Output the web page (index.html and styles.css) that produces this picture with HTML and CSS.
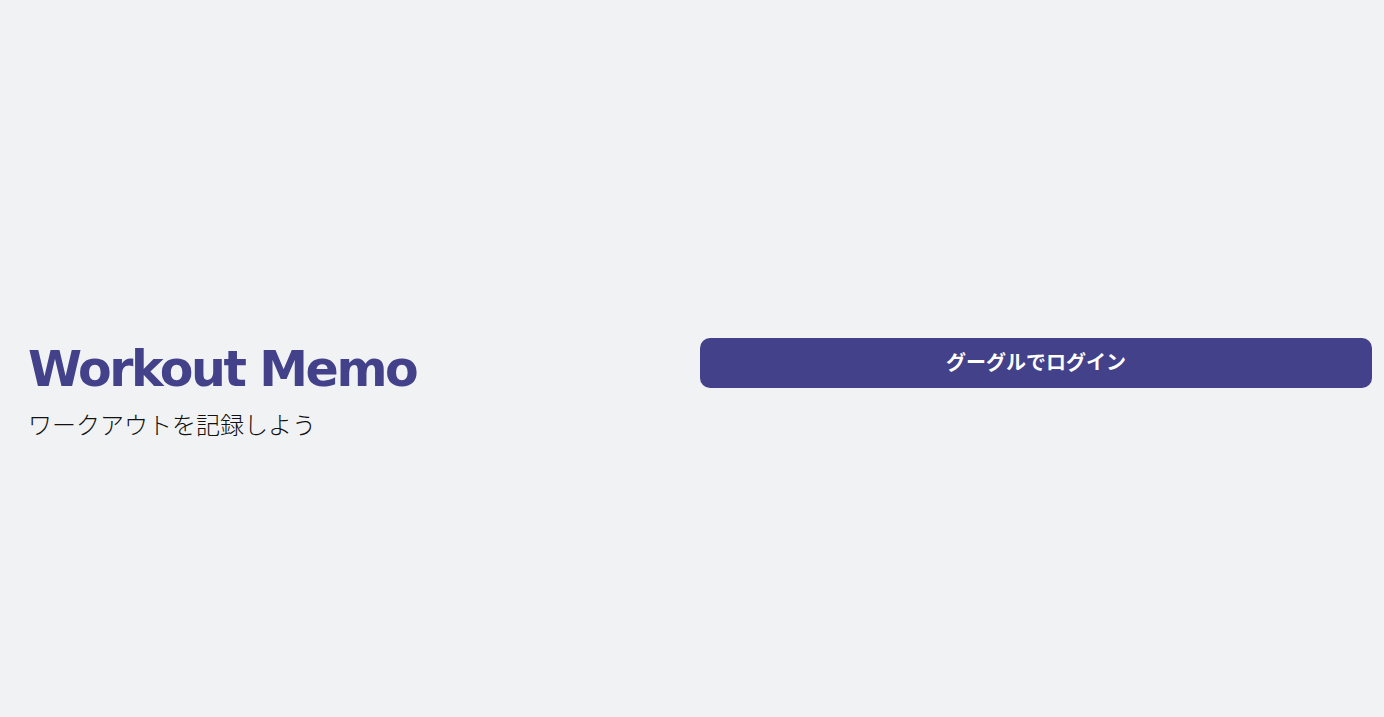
FILE: index.html
```html
<!DOCTYPE html>
<html lang="ja">
<head>
<meta charset="utf-8">
<title>Workout Memo</title>
<link rel="stylesheet" href="styles.css">
</head>
<body>
<main class="page">
  <section class="hero">
    <h1 class="title">Workout Memo</h1>
    <p class="subtitle">ワークアウトを記録しよう</p>
  </section>
  <section class="actions">
    <button class="login">グーグルでログイン</button>
  </section>
</main>
</body>
</html>
```

FILE: styles.css
```css
* { box-sizing: border-box; }
html, body { margin: 0; height: 100%; }
body {
  background: #f1f2f4;
  font-family: "Noto Sans CJK JP", sans-serif;
}
.page {
  height: 100%;
  display: grid;
  grid-template-columns: 1fr 1fr;
  gap: 16px;
  padding: 60px 12px 0;
  align-content: center;
}
.hero {
  padding: 3px 16px 0;
}
.title {
  margin: 0;
  font-family: "DejaVu Sans", sans-serif;
  font-weight: 700;
  font-size: 49px;
  letter-spacing: -2.4px;
  line-height: 1.2;
  color: #43418a;
}
.subtitle {
  margin: 8px 0 0;
  font-size: 24px;
  font-weight: 300;
  line-height: 1.3;
  color: #111;
}
.login {
  width: 100%;
  height: 50px;
  padding: 0 0 4px;
  border: none;
  border-radius: 10px;
  background: #43418a;
  color: #fff;
  font-family: "Noto Sans CJK JP", sans-serif;
  font-weight: 700;
  font-size: 20px;
}
```
